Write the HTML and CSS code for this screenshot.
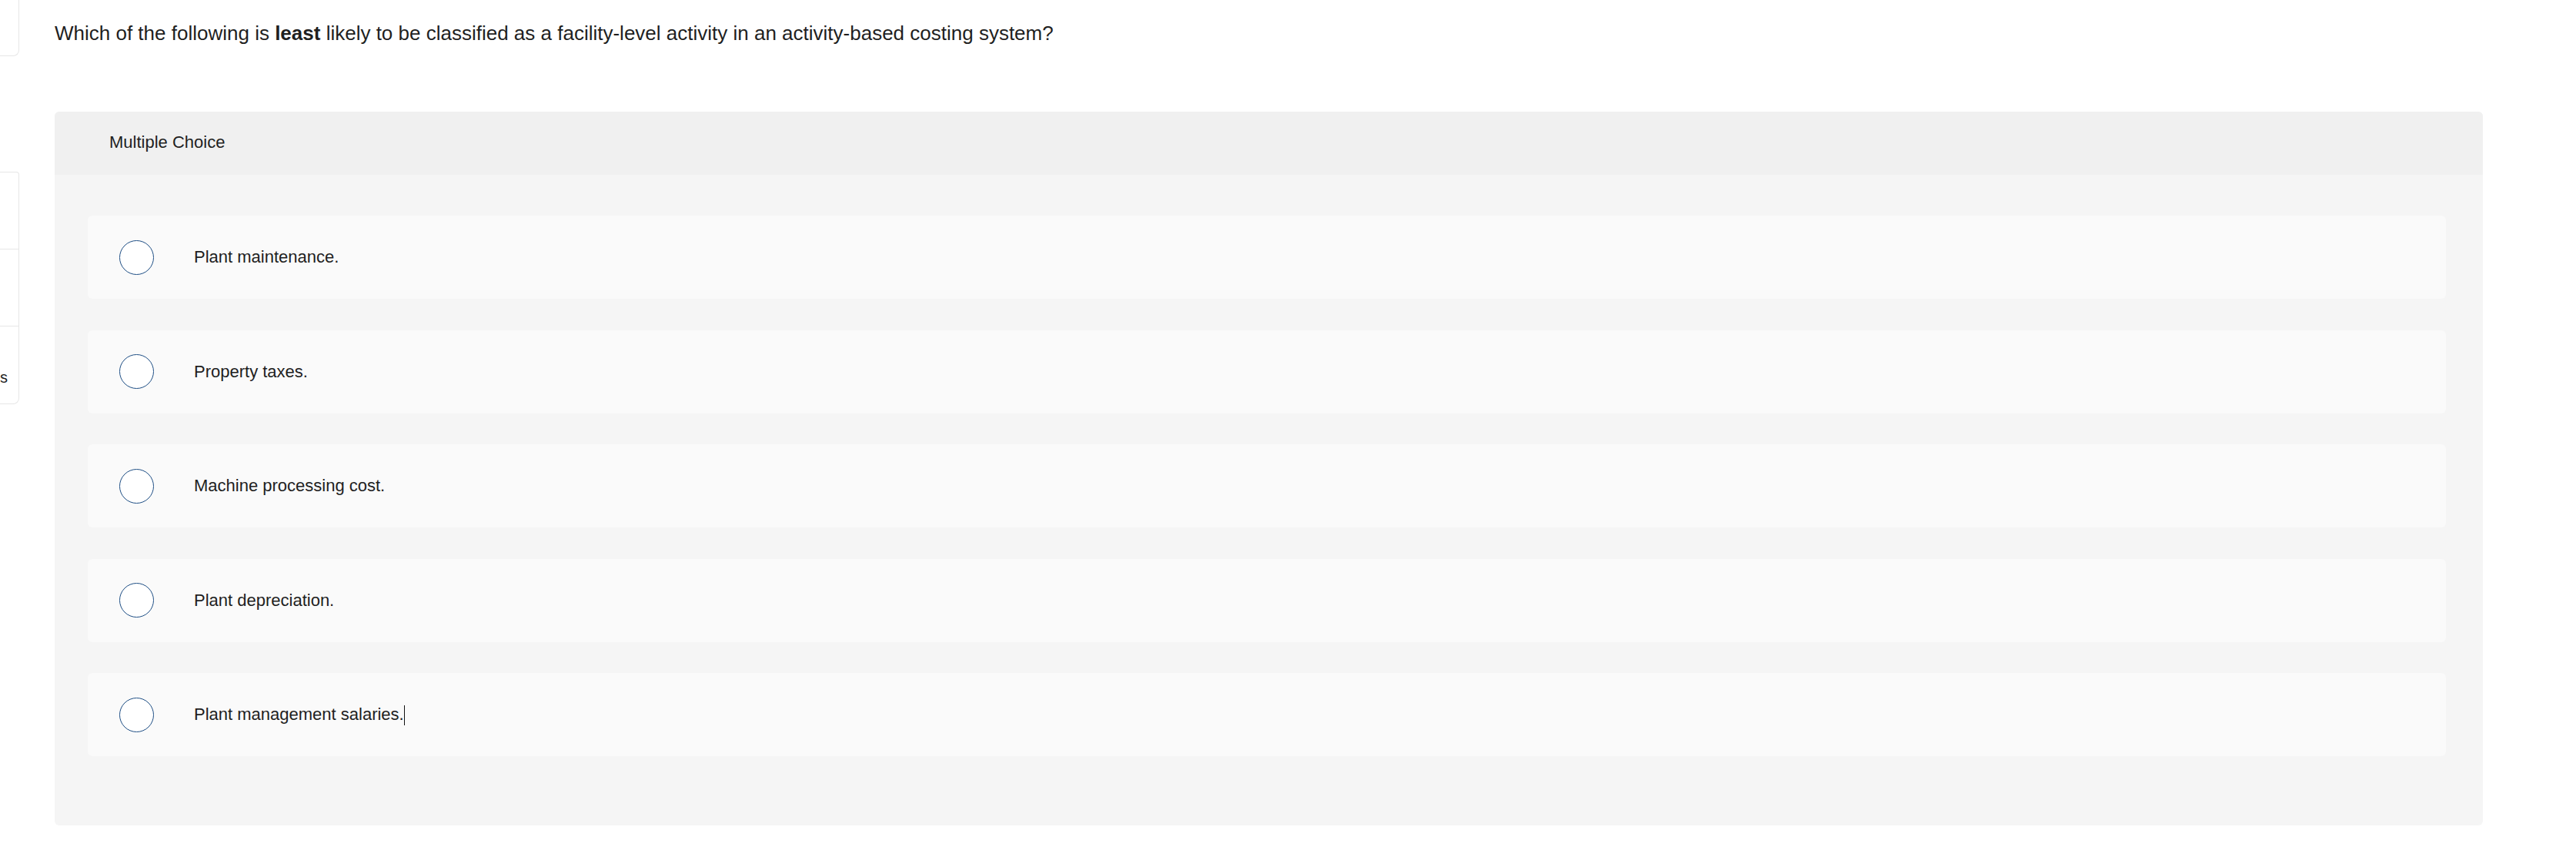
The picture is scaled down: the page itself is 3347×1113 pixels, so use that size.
FILE: index.html
```html
<!DOCTYPE html>
<html lang="en">
<head>
    <meta charset="UTF-8">
    <meta name="viewport" content="width=device-width, initial-scale=1.0">
    <title>Multiple Choice</title>
    <link rel="stylesheet" href="styles.css">
</head>
<body>
    <div class="page">
        <!-- sol kenar, ekranın dışına taşmış -->
        <aside class="side">
            <div class="side-top"></div>
            <div class="side-group">
                <div class="side-cell"></div>
                <div class="side-cell"></div>
                <div class="side-cell"><span class="side-label">s</span></div>
            </div>
        </aside>

        <main class="main">
            <p class="question">Which of the following is <strong>least</strong> likely to be classified as a facility-level activity in an activity-based costing system?</p>

            <section class="choice-panel">
                <div class="choice-head">Multiple Choice</div>
                <div class="choice-body">
                    <label class="option">
                        <span class="radio"></span>
                        <span class="option-text">Plant maintenance.</span>
                    </label>
                    <label class="option">
                        <span class="radio"></span>
                        <span class="option-text">Property taxes.</span>
                    </label>
                    <label class="option">
                        <span class="radio"></span>
                        <span class="option-text">Machine processing cost.</span>
                    </label>
                    <label class="option">
                        <span class="radio"></span>
                        <span class="option-text">Plant depreciation.</span>
                    </label>
                    <label class="option">
                        <span class="radio"></span>
                        <span class="option-text">Plant management salaries.<span class="caret"></span></span>
                    </label>
                </div>
            </section>
        </main>
    </div>
</body>
</html>
```

FILE: styles.css
```css
* {
    margin: 0;
    padding: 0;
    box-sizing: border-box;
}

body {
    font-family: "Liberation Sans", Arial, sans-serif;
    background-color: #fff;
    color: #1f1f1f;
    height: 100vh;
    overflow: hidden;
}

.page {
    display: flex;
    align-items: flex-start;
}

/* sol kenar */
.side {
    width: 25px;
    flex-shrink: 0;
    display: flex;
    flex-direction: column;
    gap: 150px;
}

.side-top {
    height: 73px;
    border-right: 1px solid #e6e6e6;
    border-bottom: 1px solid #e6e6e6;
    border-bottom-right-radius: 8px;
}

.side-group {
    border: 1px solid #e6e6e6;
    border-left: none;
    border-radius: 0 4px 8px 0;
}

.side-cell {
    height: 100px;
    border-bottom: 1px solid #e6e6e6;
}

.side-cell:last-child {
    border-bottom: none;
}

.side-label {
    display: block;
    padding-top: 51px;
    font-size: 20px;
    line-height: 30px;
}

.main {
    padding-left: 46px;
    width: 3201px;
}

.question {
    font-size: 26px;
    line-height: 36px;
    padding-top: 25px;
    margin-bottom: 84px;
}

.question strong {
    font-weight: bold;
}

.choice-panel {
    border-radius: 6px;
    background: #f5f5f5;
    overflow: hidden;
}

.choice-head {
    background: #f0f0f0;
    height: 82px;
    padding: 25px 71px 0;
    font-size: 22px;
    line-height: 30px;
}

.choice-body {
    display: flex;
    flex-direction: column;
    gap: 40.5px;
    padding: 53px 48px 90px 43px;
}

.option {
    display: flex;
    align-items: center;
    height: 108px;
    padding-left: 41px;
    background: #fafafa;
    border-radius: 6px;
    cursor: pointer;
}

.radio {
    width: 45px;
    height: 45px;
    flex-shrink: 0;
    border: 1.5px solid #1f4f85;
    border-radius: 50%;
    background: #fff;
}

.option-text {
    margin-left: 52px;
    font-size: 22px;
    line-height: 30px;
}

.caret {
    display: inline-block;
    width: 1.5px;
    height: 26px;
    background: #111;
    vertical-align: -7px;
}
```
